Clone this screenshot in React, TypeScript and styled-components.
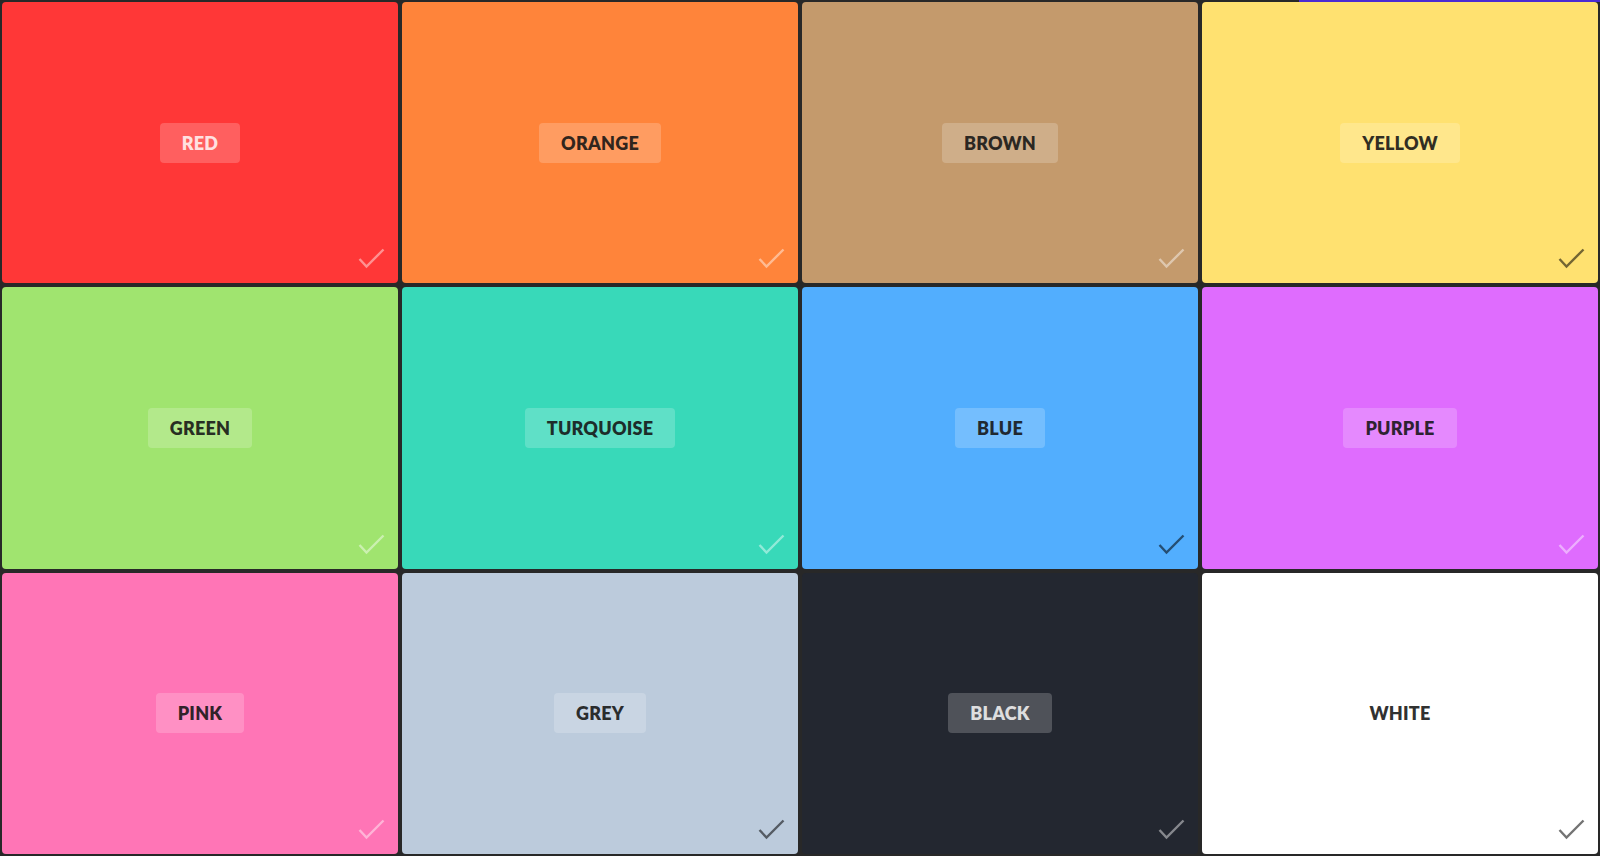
import React from "react";
import styled, { createGlobalStyle } from "styled-components";

const GlobalStyle = createGlobalStyle`
  html, body {
    margin: 0;
    padding: 0;
    background: #282828;
    font-family: Lato, "Noto Sans", sans-serif;
  }
  #root {
    height: 100vh;
  }
`;

type Tone = "light" | "dark";

interface Swatch {
  name: string;
  color: string;
  text: Tone;
  check: Tone;
  chip?: boolean;
}

const swatches: Swatch[] = [
  { name: "Red", color: "#ff3737", text: "light", check: "light" },
  { name: "Orange", color: "#ff843a", text: "dark", check: "light" },
  { name: "Brown", color: "#c49a6c", text: "dark", check: "light" },
  { name: "Yellow", color: "#ffe170", text: "dark", check: "dark" },
  { name: "Green", color: "#a0e46f", text: "dark", check: "light" },
  { name: "Turquoise", color: "#38d9b9", text: "dark", check: "light" },
  { name: "Blue", color: "#52aefe", text: "dark", check: "dark" },
  { name: "Purple", color: "#df6cfe", text: "dark", check: "light" },
  { name: "Pink", color: "#ff75b6", text: "dark", check: "light" },
  { name: "Grey", color: "#bccbdc", text: "dark", check: "dark" },
  { name: "Black", color: "#232730", text: "light", check: "light" },
  { name: "White", color: "#ffffff", text: "dark", check: "dark" },
];

const Page = styled.main`
  position: relative;
  box-sizing: border-box;
  height: 100vh;
  padding: 2px;
  display: grid;
  grid-template-columns: repeat(4, 1fr);
  grid-template-rows: repeat(3, 1fr);
  gap: 4px;
`;

const Progress = styled.div`
  position: absolute;
  top: 0;
  right: 0;
  width: 301px;
  height: 2px;
  background: #4b2bd2;
`;

const Card = styled.button<{ $bg: string }>`
  position: relative;
  border: 0;
  padding: 0;
  margin: 0;
  border-radius: 4px;
  background: ${(p) => p.$bg};
  display: flex;
  align-items: center;
  justify-content: center;
  cursor: pointer;
  font: inherit;
`;

const Label = styled.span<{ $tone: Tone }>`
  display: inline-flex;
  align-items: center;
  height: 40px;
  padding: 0 22px;
  border-radius: 4px;
  background: rgba(255, 255, 255, 0.2);
  font-size: 18px;
  font-weight: 800;
  letter-spacing: 0.2px;
  text-transform: uppercase;
  color: ${(p) =>
    p.$tone === "light" ? "rgba(255, 255, 255, 0.82)" : "rgba(20, 20, 20, 0.88)"};
`;

const Check = styled.svg<{ $tone: Tone }>`
  position: absolute;
  right: 13px;
  bottom: 14px;
  width: 27px;
  height: 22px;
  stroke: ${(p) =>
    p.$tone === "light" ? "rgba(255, 255, 255, 0.45)" : "rgba(0, 0, 0, 0.55)"};
`;

const CheckMark = ({ tone }: { tone: Tone }) => (
  <Check $tone={tone} viewBox="0 0 27 22" fill="none">
    <polyline points="1.5,12 8.5,19.5 25.5,2.5" strokeWidth="2.4" />
  </Check>
);

export default function App() {
  return (
    <>
      <GlobalStyle />
      <Page>
        <Progress />
        {swatches.map((s) => (
          <Card key={s.name} $bg={s.color}>
            <Label $tone={s.text}>{s.name}</Label>
            <CheckMark tone={s.check} />
          </Card>
        ))}
      </Page>
    </>
  );
}
